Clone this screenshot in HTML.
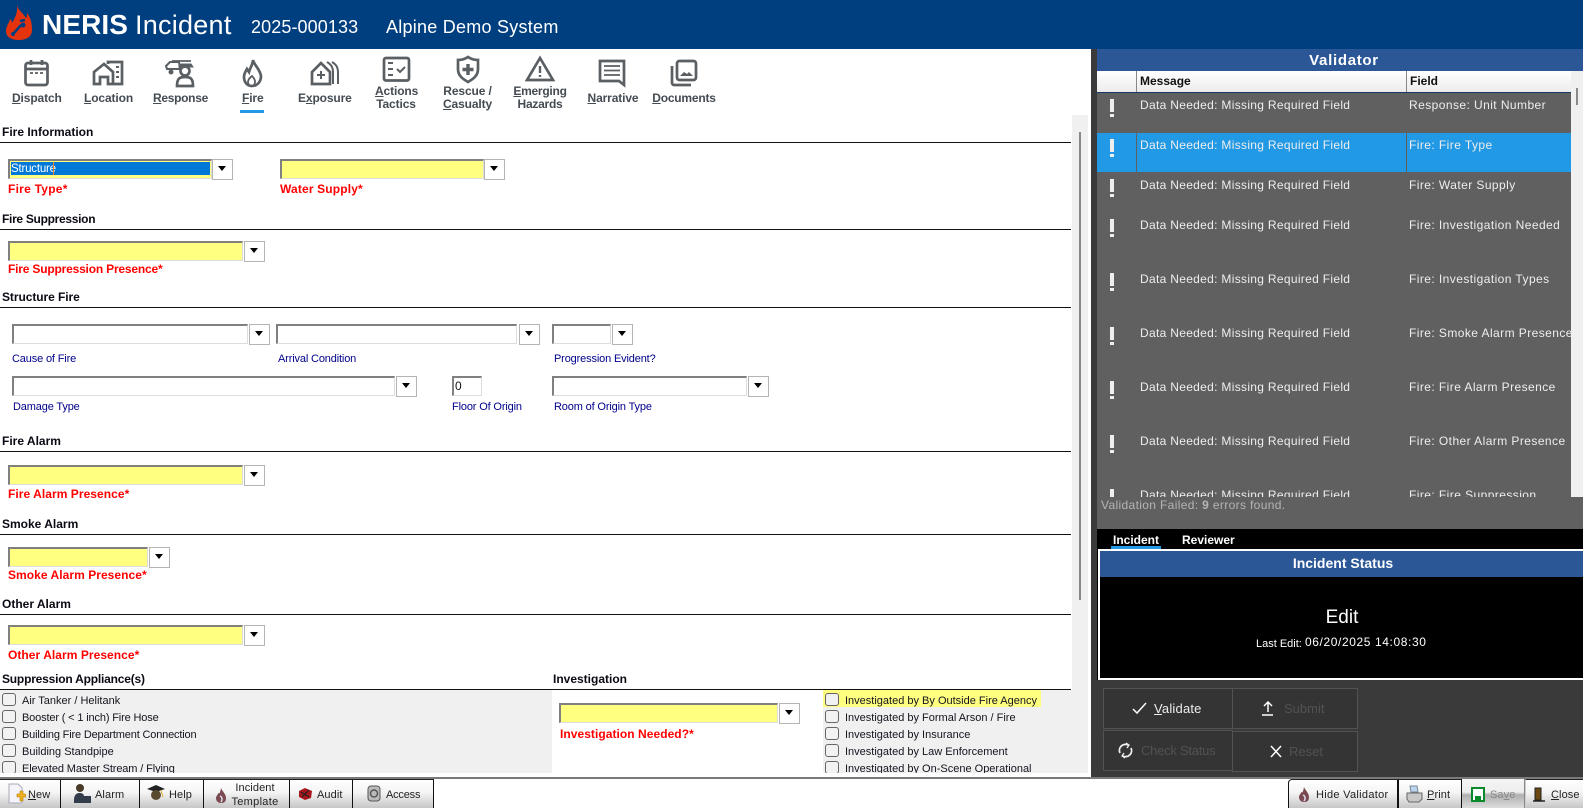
<!DOCTYPE html>
<html><head><meta charset="utf-8"><title>NERIS Incident</title>
<style>
html,body{margin:0;padding:0;width:1583px;height:808px;overflow:hidden;background:#fff}
body{position:relative;font-family:"Liberation Sans",sans-serif;font-size:11px;color:#111}
div,span.a,svg.a{position:absolute}
.t{white-space:nowrap;height:16px;line-height:16px}
.h{font-weight:bold;font-size:12px;color:#0a0a14;left:2px}
.r{position:absolute;height:1px;background:#111;left:0;width:1071px}
.l{font-weight:bold;font-size:12px;color:#f00;letter-spacing:.05px}
.b{font-size:11px;color:#00008b;letter-spacing:-.15px}
.i{box-sizing:border-box;height:20px;background:#fff;border-top:2px solid #808080;border-left:2px solid #808080;border-right:1px solid #ddd;border-bottom:1px solid #ddd}
.y{background:#ffff80}
.d{box-sizing:border-box;width:21px;height:21px;background:#fff;border:1px solid #b4b4b4}
.d:after{content:"";position:absolute;left:5px;top:6px;border-left:4px solid transparent;border-right:4px solid transparent;border-top:5px solid #000}
.n{font-weight:bold;font-size:12px;color:#444b52;text-align:center;line-height:13px;white-space:nowrap;letter-spacing:-.12px}
.n u{text-decoration-thickness:1px}
.c{box-sizing:border-box;width:14px;height:13px;border:1px solid #666;border-radius:3px;background:#f2f2f2}
.k{font-size:11px;color:#14141e}
.m{font-size:12px;color:#eee;letter-spacing:.31px}
.f{font-size:12px;color:#eee;letter-spacing:.43px}
.x{width:4px;background:#eee}
.tb{font-size:11px;color:#222;letter-spacing:.1px}
.btn{box-sizing:border-box;background:#343434;border:1px solid #525252}
.dis{color:#525252;font-size:13px}
.tbg{top:779px;height:29px;background:linear-gradient(#fff 0,#f4f4f4 45%,#c6c6c6 100%);box-sizing:border-box;border-right:1px solid #111;border-top:1px solid #222}
</style></head><body>

<!-- header -->
<div style="left:0;top:0;width:1583px;height:49px;background:#003f7f"></div>
<svg class="a" style="left:5px;top:4px" width="28" height="37" viewBox="0 0 28 37"><path d="M12 1c1 5 6 8 9 13 1-1 1-3 1-5 4 5 5 11 5 17 0 7-6 10-13 10C6 36 1 33 1 27c0-5 3-7 4-12 1 1 2 2 2 4 3-5 6-11 5-18z" fill="#e5330e"/><path d="M9 29l7-8M15 17l5-1" stroke="#003f7f" stroke-width="2.500" fill="none"/><circle cx="18" cy="21" r="2.500" fill="#003f7f"/><circle cx="8" cy="30" r="2" fill="#003f7f"/></svg>
<div class="t" style="left:42px;top:9px;height:32px;line-height:32px;font-size:28px;font-weight:bold;color:#fff;letter-spacing:.1px">NERIS</div>
<div class="t" style="left:135px;top:9px;height:32px;line-height:32px;font-size:27px;color:#fff;letter-spacing:.25px">Incident</div>
<div class="t" style="left:251px;top:15px;height:24px;line-height:24px;font-size:18px;color:#fff;letter-spacing:.1px">2025-000133</div>
<div class="t" style="left:386px;top:15px;height:24px;line-height:24px;font-size:18px;color:#fff;letter-spacing:.25px">Alpine Demo System</div>

<!-- nav icons -->
<svg class="a" style="left:0;top:49px" width="730" height="45" viewBox="0 49 730 45" fill="none" stroke="#5a5f64" stroke-width="2.700">
<rect x="25.500" y="63" width="22" height="22" rx="2.500"/><path d="M25 69h23M31 60v5M42 60v5"/><path d="M30 73h3M35 73h3M40 73h3" stroke-width="1.800"/>
<path d="M94 84V72l10-8 9 8v12h-5v-7h-8v7z"/><path d="M108 64v-2h14v22h-8" /><path d="M116 67h3M116 72h3M116 77h3" stroke-width="2"/>
<path d="M166 66l4-4h9l1 7h-13z" stroke-width="2"/><path d="M172 61h19" stroke-width="1.800"/><circle cx="171" cy="72" r="2.500" fill="#5a5f64" stroke="none"/><path d="M181 64h10l2 3h-14z" fill="#5a5f64" stroke-width="1"/><circle cx="185" cy="71" r="4.500"/><path d="M177 86c0-8 3-9 8-9s8 1 8 9z"/>
<path d="M253 60c1 5 7 9 8 16 0 6-4 10-9 10s-8-4-8-9c0-4 2-6 3-8l2 3c1-4 4-8 4-12z"/><path d="M249 85c-2-3-1-6 3-9 3 3 4 6 2 9" stroke-width="1.800"/>
<path d="M312 84V72l9-9 9 9v12z" /><path d="M317 75h8M321 71v8" stroke-width="2"/><path d="M327 62c5 3 6 6 6 11v11M332 62c5 3 6 6 6 11v11" stroke-width="2"/>
<rect x="384" y="58" width="25" height="22.500" rx="2"/><path d="M388 63h5M388 69h5M388 75h5" stroke-width="2"/><path d="M397 69l3 3 5-5" stroke-width="2"/>
<path d="M468 57c3 2 7 3 10 3v9c0 7-5 10-10 13-5-3-10-6-10-13v-9c3 0 7-1 10-3z"/><path d="M468 64v11M462.500 69.500h11" stroke-width="3.400"/>
<path d="M540 58l13 22h-26z"/><path d="M540 66v7M540 75v2" stroke-width="2.400"/>
<path d="M600 61h24v24l-5-4h-19z"/><path d="M604 66h16M604 70.500h16M604 75h16" stroke-width="1.800"/>
<rect x="677" y="61" width="19" height="19" rx="2.500"/><path d="M672 66v17c0 1 1 2 2 2h17"/><path d="M680 76l4-4 3 2 2-2 4 4z" fill="#5a5f64" stroke="none"/>
</svg>

<div class="n" style="left:12px;top:92px;width:49px"><u>D</u>ispatch</div>
<div class="n" style="left:84px;top:92px;width:48px"><u>L</u>ocation</div>
<div class="n" style="left:153px;top:92px;width:54px;letter-spacing:-.3px"><u>R</u>esponse</div>
<div class="n" style="left:242px;top:92px;width:21px"><u>F</u>ire</div>
<div style="left:240px;top:110px;width:24px;height:3px;background:#2299e4"></div>
<div class="n" style="left:298px;top:92px;width:53px">E<u>x</u>posure</div>
<div class="n" style="left:375px;top:85px;width:42px"><u>A</u>ctions<br>Tactics</div>
<div class="n" style="left:443px;top:85px;width:49px">Rescue /<br><u>C</u>asualty</div>
<div class="n" style="left:513px;top:85px;width:54px;letter-spacing:-.25px"><u>E</u>merging<br>Hazards</div>
<div class="n" style="left:586px;top:92px;width:54px"><u>N</u>arrative</div>
<div class="n" style="left:652px;top:92px;width:64px;letter-spacing:-.2px"><u>D</u>ocuments</div>

<!-- left scrollbar -->
<div style="left:1072px;top:115px;width:16px;height:658px;background:#f0f0f0"></div>
<div style="left:1079px;top:132px;width:2px;height:468px;background:#8a8a8a"></div>

<!-- bottom grey panels -->
<div style="left:0;top:690px;width:552px;height:83px;background:#f0f0f0"></div>
<div style="left:823px;top:690px;width:249px;height:83px;background:#f0f0f0"></div>
<div style="left:823px;top:690px;width:218px;height:17px;background:#ffff80"></div>

<!-- sections -->
<div class="t h" style="top:124px">Fire Information</div><div class="r" style="top:142px"></div>
<div class="t h" style="top:211px;letter-spacing:-.3px">Fire Suppression</div><div class="r" style="top:229px"></div>
<div class="t h" style="top:289px;letter-spacing:-.07px">Structure Fire</div><div class="r" style="top:307px"></div>
<div class="t h" style="top:433px">Fire Alarm</div><div class="r" style="top:451px"></div>
<div class="t h" style="top:516px">Smoke Alarm</div><div class="r" style="top:534px"></div>
<div class="t h" style="top:596px">Other Alarm</div><div class="r" style="top:614px"></div>
<div class="t h" style="top:671px;letter-spacing:-.2px">Suppression Appliance(s)</div><div class="r" style="top:689px"></div>
<div class="t h" style="top:671px;left:553px">Investigation</div>

<!-- Fire type -->
<div class="i y" style="left:8px;top:159px;width:204px"></div>
<div style="left:11px;top:162px;width:199px;height:13px;background:#0078d7"></div>
<div class="t" style="left:11px;top:161px;font-size:11.500px;letter-spacing:-.2px;color:#fff">Structure</div>
<div style="left:53px;top:162px;width:1px;height:13px;background:#f08020"></div>
<div class="d" style="left:212px;top:159px"></div>
<div class="t l" style="left:8px;top:181px;letter-spacing:.25px">Fire Type*</div>

<div class="i y" style="left:280px;top:159px;width:204px"></div><div class="d" style="left:484px;top:159px"></div>
<div class="t l" style="left:280px;top:181px;letter-spacing:.15px">Water Supply*</div>

<div class="i y" style="left:8px;top:241px;width:235px"></div><div class="d" style="left:244px;top:241px"></div>
<div class="t l" style="left:8px;top:261px;letter-spacing:-.19px">Fire Suppression Presence*</div>

<!-- Structure -->
<div class="i" style="left:12px;top:324px;width:236px"></div><div class="d" style="left:249px;top:324px"></div>
<div class="t b" style="left:12px;top:351px">Cause of Fire</div>
<div class="i" style="left:276px;top:324px;width:241px"></div><div class="d" style="left:519px;top:324px"></div>
<div class="t b" style="left:278px;top:351px">Arrival Condition</div>
<div class="i" style="left:552px;top:324px;width:59px"></div><div class="d" style="left:612px;top:324px"></div>
<div class="t b" style="left:554px;top:351px">Progression Evident?</div>

<div class="i" style="left:12px;top:376px;width:383px"></div><div class="d" style="left:396px;top:376px"></div>
<div class="t b" style="left:13px;top:399px">Damage Type</div>
<div class="i" style="left:452px;top:376px;width:30px"></div>
<div class="t" style="left:455px;top:378px;font-size:12px;color:#111">0</div>
<div class="t b" style="left:452px;top:399px">Floor Of Origin</div>
<div class="i" style="left:552px;top:376px;width:195px"></div><div class="d" style="left:748px;top:376px"></div>
<div class="t b" style="left:554px;top:399px">Room of Origin Type</div>

<div class="i y" style="left:8px;top:465px;width:235px"></div><div class="d" style="left:244px;top:465px"></div>
<div class="t l" style="left:8px;top:486px">Fire Alarm Presence*</div>
<div class="i y" style="left:8px;top:547px;width:140px"></div><div class="d" style="left:149px;top:547px"></div>
<div class="t l" style="left:8px;top:567px">Smoke Alarm Presence*</div>
<div class="i y" style="left:8px;top:625px;width:235px"></div><div class="d" style="left:244px;top:625px"></div>
<div class="t l" style="left:8px;top:647px">Other Alarm Presence*</div>

<!-- checkboxes clip -->
<div style="left:0;top:690px;width:1072px;height:83px;overflow:hidden">
 <div class="c" style="left:2px;top:3px"></div><div class="t k" style="left:22px;top:3px">Air Tanker / Helitank</div>
 <div class="c" style="left:2px;top:20px"></div><div class="t k" style="left:22px;top:20px;letter-spacing:-.15px">Booster ( &lt; 1 inch) Fire Hose</div>
 <div class="c" style="left:2px;top:37px"></div><div class="t k" style="left:22px;top:37px;letter-spacing:-.17px">Building Fire Department Connection</div>
 <div class="c" style="left:2px;top:54px"></div><div class="t k" style="left:22px;top:54px">Building Standpipe</div>
 <div class="c" style="left:2px;top:71px"></div><div class="t k" style="left:22px;top:71px;letter-spacing:-.12px">Elevated Master Stream / Flying</div>
 <div class="c" style="left:825px;top:3px"></div><div class="t k" style="left:845px;top:3px">Investigated by By Outside Fire Agency</div>
 <div class="c" style="left:825px;top:20px"></div><div class="t k" style="left:845px;top:20px">Investigated by Formal Arson / Fire</div>
 <div class="c" style="left:825px;top:37px"></div><div class="t k" style="left:845px;top:37px">Investigated by Insurance</div>
 <div class="c" style="left:825px;top:54px"></div><div class="t k" style="left:845px;top:54px">Investigated by Law Enforcement</div>
 <div class="c" style="left:825px;top:71px"></div><div class="t k" style="left:845px;top:71px">Investigated by On-Scene Operational</div>
</div>
<div class="i y" style="left:559px;top:703px;width:219px"></div><div class="d" style="left:779px;top:703px"></div>
<div class="t l" style="left:560px;top:726px">Investigation Needed?*</div>

<!-- right panel -->
<div style="left:1091px;top:49px;width:492px;height:728px;background:#3a3a3a"></div>
<div style="left:1097px;top:49px;width:486px;height:22px;background:#2b5797"></div>
<div class="t" style="left:1101px;top:53px;width:486px;text-align:center;font-weight:bold;font-size:15px;color:#fff;letter-spacing:.7px">Validator</div>
<div style="left:1097px;top:71px;width:474px;height:21px;background:linear-gradient(#fff,#ececec)"></div>
<div style="left:1097px;top:92px;width:474px;height:1px;background:#1a3a66"></div>
<div style="left:1136px;top:71px;width:1px;height:21px;background:#888"></div>
<div style="left:1406px;top:71px;width:1px;height:21px;background:#888"></div>
<div class="t" style="left:1140px;top:73px;font-weight:bold;font-size:12px;color:#111">Message</div>
<div class="t" style="left:1410px;top:73px;font-weight:bold;font-size:12px;color:#111">Field</div>
<div style="left:1571px;top:71px;width:12px;height:426px;background:#f0f0f0"></div>
<div style="left:1576px;top:88px;width:2px;height:17px;background:#8a8a8a"></div>
<div style="left:1097px;top:93px;width:474px;height:436px;background:#606060"></div>
<div style="left:1571px;top:497px;width:12px;height:32px;background:#606060"></div>
<div style="left:1097px;top:133px;width:474px;height:39px;background:#2299e4"></div>
<div style="left:1136px;top:133px;width:1px;height:39px;background:#606060"></div>
<div style="left:1406px;top:133px;width:1px;height:39px;background:#606060"></div>

<div style="left:1097px;top:93px;width:474px;height:404px;overflow:hidden">
<div style="left:0;top:-93px;width:500px;height:600px">
<div class="x" style="left:13px;top:99px;height:13px"></div><div class="x" style="left:13px;top:114px;height:3px"></div>
<div class="x" style="left:13px;top:139px;height:13px"></div><div class="x" style="left:13px;top:154px;height:3px"></div>
<div class="x" style="left:13px;top:179px;height:13px"></div><div class="x" style="left:13px;top:194px;height:3px"></div>
<div class="x" style="left:13px;top:219px;height:13px"></div><div class="x" style="left:13px;top:234px;height:3px"></div>
<div class="x" style="left:13px;top:273px;height:13px"></div><div class="x" style="left:13px;top:288px;height:3px"></div>
<div class="x" style="left:13px;top:327px;height:13px"></div><div class="x" style="left:13px;top:342px;height:3px"></div>
<div class="x" style="left:13px;top:381px;height:13px"></div><div class="x" style="left:13px;top:396px;height:3px"></div>
<div class="x" style="left:13px;top:435px;height:13px"></div><div class="x" style="left:13px;top:450px;height:3px"></div>
<div class="x" style="left:13px;top:489px;height:13px"></div>
<div class="t m" style="left:43px;top:97px">Data Needed: Missing Required Field</div><div class="t f" style="left:312px;top:97px">Response: Unit Number</div>
<div class="t m" style="left:43px;top:137px">Data Needed: Missing Required Field</div><div class="t f" style="left:312px;top:137px">Fire: Fire Type</div>
<div class="t m" style="left:43px;top:177px">Data Needed: Missing Required Field</div><div class="t f" style="left:312px;top:177px">Fire: Water Supply</div>
<div class="t m" style="left:43px;top:217px">Data Needed: Missing Required Field</div><div class="t f" style="left:312px;top:217px">Fire: Investigation Needed</div>
<div class="t m" style="left:43px;top:271px">Data Needed: Missing Required Field</div><div class="t f" style="left:312px;top:271px">Fire: Investigation Types</div>
<div class="t m" style="left:43px;top:325px">Data Needed: Missing Required Field</div><div class="t f" style="left:312px;top:325px">Fire: Smoke Alarm Presence</div>
<div class="t m" style="left:43px;top:379px">Data Needed: Missing Required Field</div><div class="t f" style="left:312px;top:379px">Fire: Fire Alarm Presence</div>
<div class="t m" style="left:43px;top:433px">Data Needed: Missing Required Field</div><div class="t f" style="left:312px;top:433px">Fire: Other Alarm Presence</div>
<div class="t m" style="left:43px;top:487px">Data Needed: Missing Required Field</div><div class="t f" style="left:312px;top:487px">Fire: Fire Suppression</div>
</div></div>
<div class="t" style="left:1101px;top:497px;font-size:12px;color:#b4b4b4;letter-spacing:.35px">Validation Failed: <b>9</b> errors found.</div>

<!-- status -->
<div style="left:1097px;top:529px;width:486px;height:151px;background:#000"></div>
<div class="t" style="left:1113px;top:532px;font-weight:bold;font-size:12px;color:#fff">Incident</div>
<div style="left:1111px;top:546px;width:50px;height:3px;background:#2299e4"></div>
<div class="t" style="left:1182px;top:532px;font-weight:bold;font-size:12px;color:#fff">Reviewer</div>
<div style="box-sizing:border-box;left:1098px;top:549px;width:485px;height:131px;border:2px solid #fff;border-right:0;background:#000"></div>
<div style="left:1100px;top:551px;width:483px;height:26px;background:#2b5797"></div>
<div class="t" style="left:1100px;top:555px;width:486px;text-align:center;font-weight:bold;font-size:14px;color:#fff">Incident Status</div>
<div class="t" style="left:1100px;top:606px;height:24px;line-height:24px;width:484px;text-align:center;font-size:19px;color:#fff">Edit</div>
<div class="t" style="left:1256px;top:636px;font-size:11px;color:#fff">Last Edit:</div>
<div class="t" style="left:1305px;top:634px;font-size:12px;color:#fff;letter-spacing:.6px">06/20/2025 14:08:30</div>

<!-- action buttons -->
<div class="btn" style="left:1103px;top:688px;width:130px;height:41px"></div>
<div class="btn" style="left:1232px;top:688px;width:126px;height:41px"></div>
<div class="btn" style="left:1103px;top:730px;width:130px;height:41px"></div>
<div class="btn" style="left:1232px;top:731px;width:126px;height:41px"></div>
<svg class="a" style="left:1132px;top:701px" width="16" height="14" fill="none" stroke="#fff" stroke-width="1.500"><path d="M1 8l4 4 9-10"/></svg>
<div class="t" style="left:1154px;top:701px;font-size:13px;color:#eee;letter-spacing:.2px"><u>V</u>alidate</div>
<svg class="a" style="left:1261px;top:701px" width="14" height="15" fill="none" stroke="#fff" stroke-width="1.500"><path d="M7 11V2M3 5l4-4 4 4M1 14h11"/></svg>
<div class="t dis" style="left:1284px;top:701px">Submit</div>
<svg class="a" style="left:1118px;top:742px" width="15" height="17" fill="none" stroke="#eee" stroke-width="1.800"><path d="M2 11A6 6 0 0 1 10 3M13 6a6 6 0 0 1-8 8"/><path d="M8 1l3 2-2 3M7 16l-3-2 2-3" stroke-width="1.300"/></svg>
<div class="t dis" style="left:1141px;top:743px;letter-spacing:-.25px">Check Status</div>
<svg class="a" style="left:1270px;top:745px" width="12" height="13" fill="none" stroke="#fff" stroke-width="1.500"><path d="M1 1l10 11M11 1L1 12"/></svg>
<div class="t dis" style="left:1289px;top:744px">Reset</div>

<!-- toolbar -->
<div style="left:0;top:777px;width:1583px;height:2px;background:#7a7a7a"></div>
<div class="tbg" style="left:0;width:61px"></div>
<div class="tbg" style="left:61px;width:79px"></div>
<div class="tbg" style="left:140px;width:64px"></div>
<div class="tbg" style="left:204px;width:86px"></div>
<div class="tbg" style="left:290px;width:63px"></div>
<div class="tbg" style="left:353px;width:81px"></div>
<div class="tbg" style="left:1288px;width:110px;border-left:1px solid #111;border-top-left-radius:4px"></div>
<div class="tbg" style="left:1398px;width:64px;border-left:1px solid #111"></div>
<div class="tbg" style="left:1462px;width:63px;background:linear-gradient(#f4f4f4 0,#eee 45%,#b0b0b0 55%,#ddd 100%);border-right:1px solid #888;border-top:0"></div>
<div class="tbg" style="left:1525px;width:58px;border-right:0;border-left:1px solid #ccc"></div>

<svg class="a" style="left:8px;top:783px" width="18" height="22"><path d="M1 1h9l4 4v15H1z" fill="#f4f4fa" stroke="#aab"/><path d="M9 11h3V8h3v3h3v3h-3v4h-3v-4H9z" fill="#f0b020" stroke="#b07800" stroke-width=".6"/></svg>
<div class="t tb" style="left:28px;top:787px"><u>N</u>ew</div>
<svg class="a" style="left:73px;top:783px" width="18" height="21"><circle cx="7" cy="5" r="4" fill="#4a3a2a"/><path d="M1 18c0-7 3-8 6-8s4 2 4 3h7v7H1z" fill="#333c4a"/></svg>
<div class="t tb" style="left:95px;top:787px">Alarm</div>
<svg class="a" style="left:147px;top:784px" width="18" height="20"><path d="M0 5l9-4 9 4-9 3z" fill="#222"/><circle cx="9" cy="11" r="5" fill="#5a4a30"/><path d="M14 6l2 7" stroke="#d8b030"/></svg>
<div class="t tb" style="left:169px;top:787px">Help</div>
<svg class="a" style="left:215px;top:788px" width="12" height="16"><path d="M6 0c1 3 5 6 5 10s-2 5-5 5-5-2-5-5c0-2 2-3 2-5 1 1 2 1 3-5z" fill="#7a4a50"/><path d="M5 8c2 1 3 3 1 6" stroke="#dde" fill="none" stroke-width="1.500"/></svg>
<div class="t tb" style="left:206px;top:780px;width:98px;text-align:center">Incident</div>
<div class="t tb" style="left:206px;top:794px;width:98px;text-align:center;letter-spacing:.3px">Template</div>
<svg class="a" style="left:298px;top:787px" width="15" height="14"><path d="M1 4l6-3 7 3-1 7-6 2-6-3z" fill="#a8161c"/><path d="M3 5l8 5M11 3L4 10" stroke="#222" stroke-width="1.200"/></svg>
<div class="t tb" style="left:317px;top:787px">Audit</div>
<svg class="a" style="left:367px;top:785px" width="14" height="17"><rect x="1" y="1" width="12" height="15" rx="3" fill="#bbb" stroke="#555"/><circle cx="7" cy="8.500" r="3.500" fill="none" stroke="#555" stroke-width="1.500"/></svg>
<div class="t tb" style="left:386px;top:787px;letter-spacing:-.2px">Access</div>

<svg class="a" style="left:1298px;top:787px" width="12" height="16"><path d="M6 0c1 3 5 6 5 10s-2 5-5 5-5-2-5-5c0-2 2-3 2-5 1 1 2 1 3-5z" fill="#7a4a50"/><path d="M5 8c2 1 3 3 1 6" stroke="#dde" fill="none" stroke-width="1.500"/></svg>
<div class="t tb" style="left:1316px;top:787px;letter-spacing:.3px">Hide Validator</div>
<svg class="a" style="left:1406px;top:785px" width="17" height="18"><path d="M4 1h7l1 6H5z" fill="#bcd4ee" stroke="#789"/><path d="M1 8h15v6l-3 3H3l-2-3z" fill="#c8c8c8" stroke="#666"/></svg>
<div class="t tb" style="left:1427px;top:787px"><u>P</u>rint</div>
<svg class="a" style="left:1471px;top:787px" width="14" height="15"><rect x="1" y="1" width="12" height="13" fill="#fff" stroke="#0a8a2a" stroke-width="2"/><rect x="4" y="9" width="6" height="5" fill="#0a8a2a"/></svg>
<div class="t tb" style="left:1490px;top:787px;color:#888">Sa<u>v</u>e</div>
<svg class="a" style="left:1533px;top:787px" width="13" height="15"><rect x="2" y="1" width="6" height="12" fill="#6a4a10" stroke="#222"/><path d="M0 14h12" stroke="#222" stroke-width="1.500"/></svg>
<div class="t tb" style="left:1551px;top:787px"><u>C</u>lose</div>
</body></html>
